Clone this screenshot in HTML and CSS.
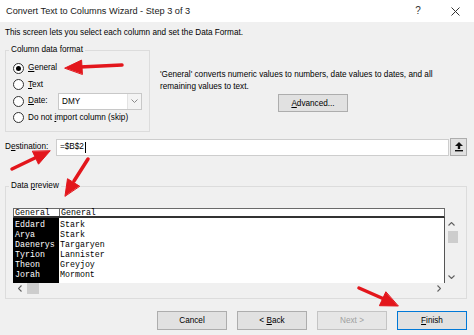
FILE: index.html
```html
<!DOCTYPE html>
<html lang="en">
<head>
    <meta charset="UTF-8">
    <title>Convert Text to Columns Wizard - Step 3 of 3</title>
    <link rel="stylesheet" href="styles.css">
</head>
<body>
    <div class="titlebar">
        <span class="title">Convert Text to Columns Wizard - Step 3 of 3</span>
        <span class="help">?</span>
        <span class="close">
            <svg width="9" height="9" viewBox="0 0 9 9"><path d="M0.5 0.5L8.5 8.5M8.5 0.5L0.5 8.5" stroke="#333" stroke-width="1"/></svg>
        </span>
    </div>

    <div class="dialog">
        <p class="intro">This screen lets you select each column and set the Data Format.</p>

        <div class="format-row">
            <fieldset class="group format">
                <legend>Column data format</legend>
                <label class="radio"><span class="dot checked"></span><span><u>G</u>eneral</span></label>
                <label class="radio"><span class="dot"></span><span><u>T</u>ext</span></label>
                <label class="radio">
                    <span class="dot"></span><span class="date-label"><u>D</u>ate:</span>
                    <span class="combo">
                        <span class="combo-value">DMY</span>
                        <span class="combo-arrow">
                            <svg width="7" height="4" viewBox="0 0 7 4"><path d="M0.5 0.5L3.5 3.5L6.5 0.5" fill="none" stroke="#8a8a8a" stroke-width="1"/></svg>
                        </span>
                    </span>
                </label>
                <label class="radio"><span class="dot"></span><span>Do not <u>i</u>mport column (skip)</span></label>
            </fieldset>

            <div class="format-info">
                <p>'General' converts numeric values to numbers, date values to dates, and all<br>remaining values to text.</p>
                <button class="btn advanced"><u>A</u>dvanced...</button>
            </div>
        </div>

        <div class="dest-row">
            <label class="dest-label">D<u>e</u>stination:</label>
            <div class="dest-input">=$B$2<span class="caret"></span></div>
            <button class="dest-button">
                <svg width="8" height="10" viewBox="0 0 8 10"><path d="M4 0L8 4H5.2V7H2.8V4H0Z" fill="#111"/><rect x="0" y="8" width="8" height="1.4" fill="#111"/></svg>
            </button>
        </div>

        <fieldset class="group preview">
            <legend>Data <u>p</u>review</legend>
            <div class="grid-head">
                <span class="col1">General</span>
                <span class="col2">General</span>
            </div>
            <div class="grid-row">
                <div class="grid-body">
                    <div class="col1">
                        <div>Eddard</div>
                        <div>Arya</div>
                        <div>Daenerys</div>
                        <div>Tyrion</div>
                        <div>Theon</div>
                        <div>Jorah</div>
                    </div>
                    <div class="col2">
                        <div>Stark</div>
                        <div>Stark</div>
                        <div>Targaryen</div>
                        <div>Lannister</div>
                        <div>Greyjoy</div>
                        <div>Mormont</div>
                    </div>
                </div>
                <div class="vscroll">
                    <span class="sb-arrow up">
                        <svg width="7" height="4" viewBox="0 0 7 4"><path d="M0.5 3.5L3.5 0.5L6.5 3.5" fill="none" stroke="#606060" stroke-width="1.1"/></svg>
                    </span>
                    <span class="sb-thumb"></span>
                    <span class="sb-space"></span>
                    <span class="sb-arrow down">
                        <svg width="7" height="4" viewBox="0 0 7 4"><path d="M0.5 0.5L3.5 3.5L6.5 0.5" fill="none" stroke="#606060" stroke-width="1.1"/></svg>
                    </span>
                </div>
            </div>
            <div class="hscroll">
                <span class="sb-arrow left">
                    <svg width="4" height="7" viewBox="0 0 4 7"><path d="M3.5 0.5L0.5 3.5L3.5 6.5" fill="none" stroke="#606060" stroke-width="1.1"/></svg>
                </span>
                <span class="sb-thumb"></span>
                <span class="sb-space"></span>
                <span class="sb-arrow right">
                    <svg width="4" height="7" viewBox="0 0 4 7"><path d="M0.5 0.5L3.5 3.5L0.5 6.5" fill="none" stroke="#606060" stroke-width="1.1"/></svg>
                </span>
            </div>
        </fieldset>

        <div class="buttons">
            <button class="btn">Cancel</button>
            <button class="btn">&lt; <u>B</u>ack</button>
            <button class="btn" disabled>Next &gt;</button>
            <button class="btn default"><u>F</u>inish</button>
        </div>
    </div>

    <!-- red annotation arrows drawn over the dialog -->
    <svg class="arrows" width="474" height="335" viewBox="0 0 474 335">
        <g stroke="#e3161c" stroke-width="3.5" stroke-linecap="round" fill="#e3161c">
            <line x1="122" y1="65" x2="80" y2="67"/>
            <polygon points="65,68 81.6,60.1 82.4,74.1" stroke-width="1"/>
            <line x1="12" y1="169" x2="37" y2="157"/>
            <polygon points="50,151 38.5,164.2 32.5,151.5" stroke-width="1"/>
            <line x1="88" y1="159" x2="74" y2="181"/>
            <polygon points="65,196 67.5,178.7 79.4,186.1" stroke-width="1"/>
            <line x1="359" y1="288" x2="384" y2="299"/>
            <polygon points="398,306 379.4,305.7 385.7,292.1" stroke-width="1"/>
        </g>
    </svg>
</body>
</html>
```

FILE: styles.css
```css
/* Basic Reset */
* {
    box-sizing: border-box;
    margin: 0;
    padding: 0;
}

body {
    width: 474px;
    height: 335px;
    overflow: hidden;
    position: relative;
    background: #f0f0f0;
    color: #000;
    font-family: 'Liberation Sans', Arial, sans-serif;
    font-size: 8.2px;
    line-height: 12px;
}

button {
    font-family: inherit;
    font-size: inherit;
    color: #000;
    background: #e1e1e1;
    border: 1px solid #adadad;
    border-radius: 0;
    outline: none;
}

/* Title bar */
.titlebar {
    display: flex;
    align-items: center;
    height: 22px;
    padding-left: 6px;
    background: #fff;
}

.title {
    flex: 1;
    font-size: 9.2px;
    color: #1a1a1a;
}

.help {
    width: 30px;
    text-align: center;
    font-size: 10px;
    color: #333;
}

.close {
    display: flex;
    justify-content: center;
    width: 41px;
    padding-left: 3px;
}

/* Dialog body */
.dialog {
    padding: 0 7px 0 5px;
}

.intro {
    margin-top: 5px;
}

.format-row {
    display: flex;
    margin-top: 5px;
}

.group {
    border: 1px solid #dcdcdc;
}

.group legend {
    padding: 0 2px;
}

.format {
    width: 145px;
    height: 88px;
    padding: 4px 4px 5px 3px;
}

.radio {
    display: flex;
    align-items: center;
    height: 16.5px;
    padding-left: 4px;
}

.dot {
    display: flex;
    align-items: center;
    justify-content: center;
    flex: none;
    width: 11px;
    height: 11px;
    margin-right: 4px;
    border: 1px solid #333;
    border-radius: 50%;
    background: #fff;
}

.dot.checked::after {
    content: "";
    width: 5px;
    height: 5px;
    border-radius: 50%;
    background: #000;
}

.date-label {
    width: 30px;
}

.combo {
    display: flex;
    width: 84px;
    height: 17px;
    border: 1px solid #c8c8c8;
    background: #fff;
}

.combo-value {
    flex: 1;
    padding-left: 3px;
    line-height: 15px;
}

.combo-arrow {
    display: flex;
    align-items: center;
    justify-content: center;
    width: 14px;
    border-left: 1px solid #e3e3e3;
    background: #f4f4f4;
}

.format-info {
    padding: 25px 0 0 10px;
}

.advanced {
    display: block;
    width: 70px;
    height: 18px;
    margin: 1px 0 0 118px;
}

/* Destination */
.dest-row {
    display: flex;
    align-items: center;
    height: 18px;
    margin-top: 6px;
}

.dest-label {
    width: 51px;
}

.dest-input {
    display: flex;
    align-items: center;
    flex: 1;
    height: 17px;
    padding-left: 3px;
    border: 1px solid #cdcdcd;
    background: #fff;
}

.caret {
    width: 1px;
    height: 11px;
    margin-left: 1px;
    background: #000;
}

.dest-button {
    display: flex;
    align-items: center;
    justify-content: center;
    width: 17px;
    height: 18px;
    margin-left: 1px;
}

/* Data preview */
.preview {
    margin-top: 24px;
    padding: 16px 8px 4px 3px;
}

.grid-head,
.grid-row,
.hscroll {
    margin-left: 4px;
}

.grid-head {
    display: flex;
    width: 432px;
    height: 10px;
    border: 1px solid #6a6a6a;
    border-bottom: 2px solid #333;
    background: #fff;
    font-family: 'Liberation Mono', 'Courier New', monospace;
    font-size: 8.3px;
    line-height: 7px;
}

.grid-head .col1 {
    width: 45px;
    padding-left: 1px;
}

.grid-head .col2 {
    flex: 1;
    padding-left: 1px;
    border-left: 1px solid #6a6a6a;
}

.grid-row {
    display: flex;
}

.grid-body {
    display: flex;
    width: 432px;
    height: 65px;
    border-left: 1px solid #000;
    border-right: 1px solid #555;
    font-family: 'Liberation Mono', 'Courier New', monospace;
    font-size: 8.3px;
    line-height: 10px;
}

.grid-body .col1 {
    width: 45px;
    padding: 2px 0 0 1px;
    background: #000;
    color: #fff;
}

.grid-body .col2 {
    flex: 1;
    padding: 2px 0 0 1px;
    background: #fff;
}

.vscroll {
    display: flex;
    flex-direction: column;
    width: 13px;
    height: 65px;
}

.sb-arrow {
    display: flex;
    align-items: center;
    justify-content: center;
}

.vscroll .sb-arrow {
    height: 12px;
}

.vscroll .sb-thumb {
    width: 10px;
    height: 12px;
    margin: 1px 0 0 3px;
    background: #cdcdcd;
}

.sb-space {
    flex: 1;
}

.hscroll {
    display: flex;
    width: 432px;
    height: 11px;
}

.hscroll .sb-arrow {
    width: 13px;
}

.hscroll .sb-thumb {
    width: 12px;
    margin-left: 1px;
    background: #cdcdcd;
}

/* Bottom buttons */
.buttons {
    display: flex;
    justify-content: flex-end;
    gap: 10px;
    margin-top: 12px;
}

.buttons .btn {
    width: 70px;
    height: 19px;
}

.btn:disabled {
    color: #a0a0a0;
    background: #e6e6e6;
    border-color: #c4c4c4;
}

.btn.default {
    border-color: #0078d7;
}

/* Annotation overlay */
.arrows {
    position: absolute;
    left: 0;
    top: 0;
    pointer-events: none;
}
```
